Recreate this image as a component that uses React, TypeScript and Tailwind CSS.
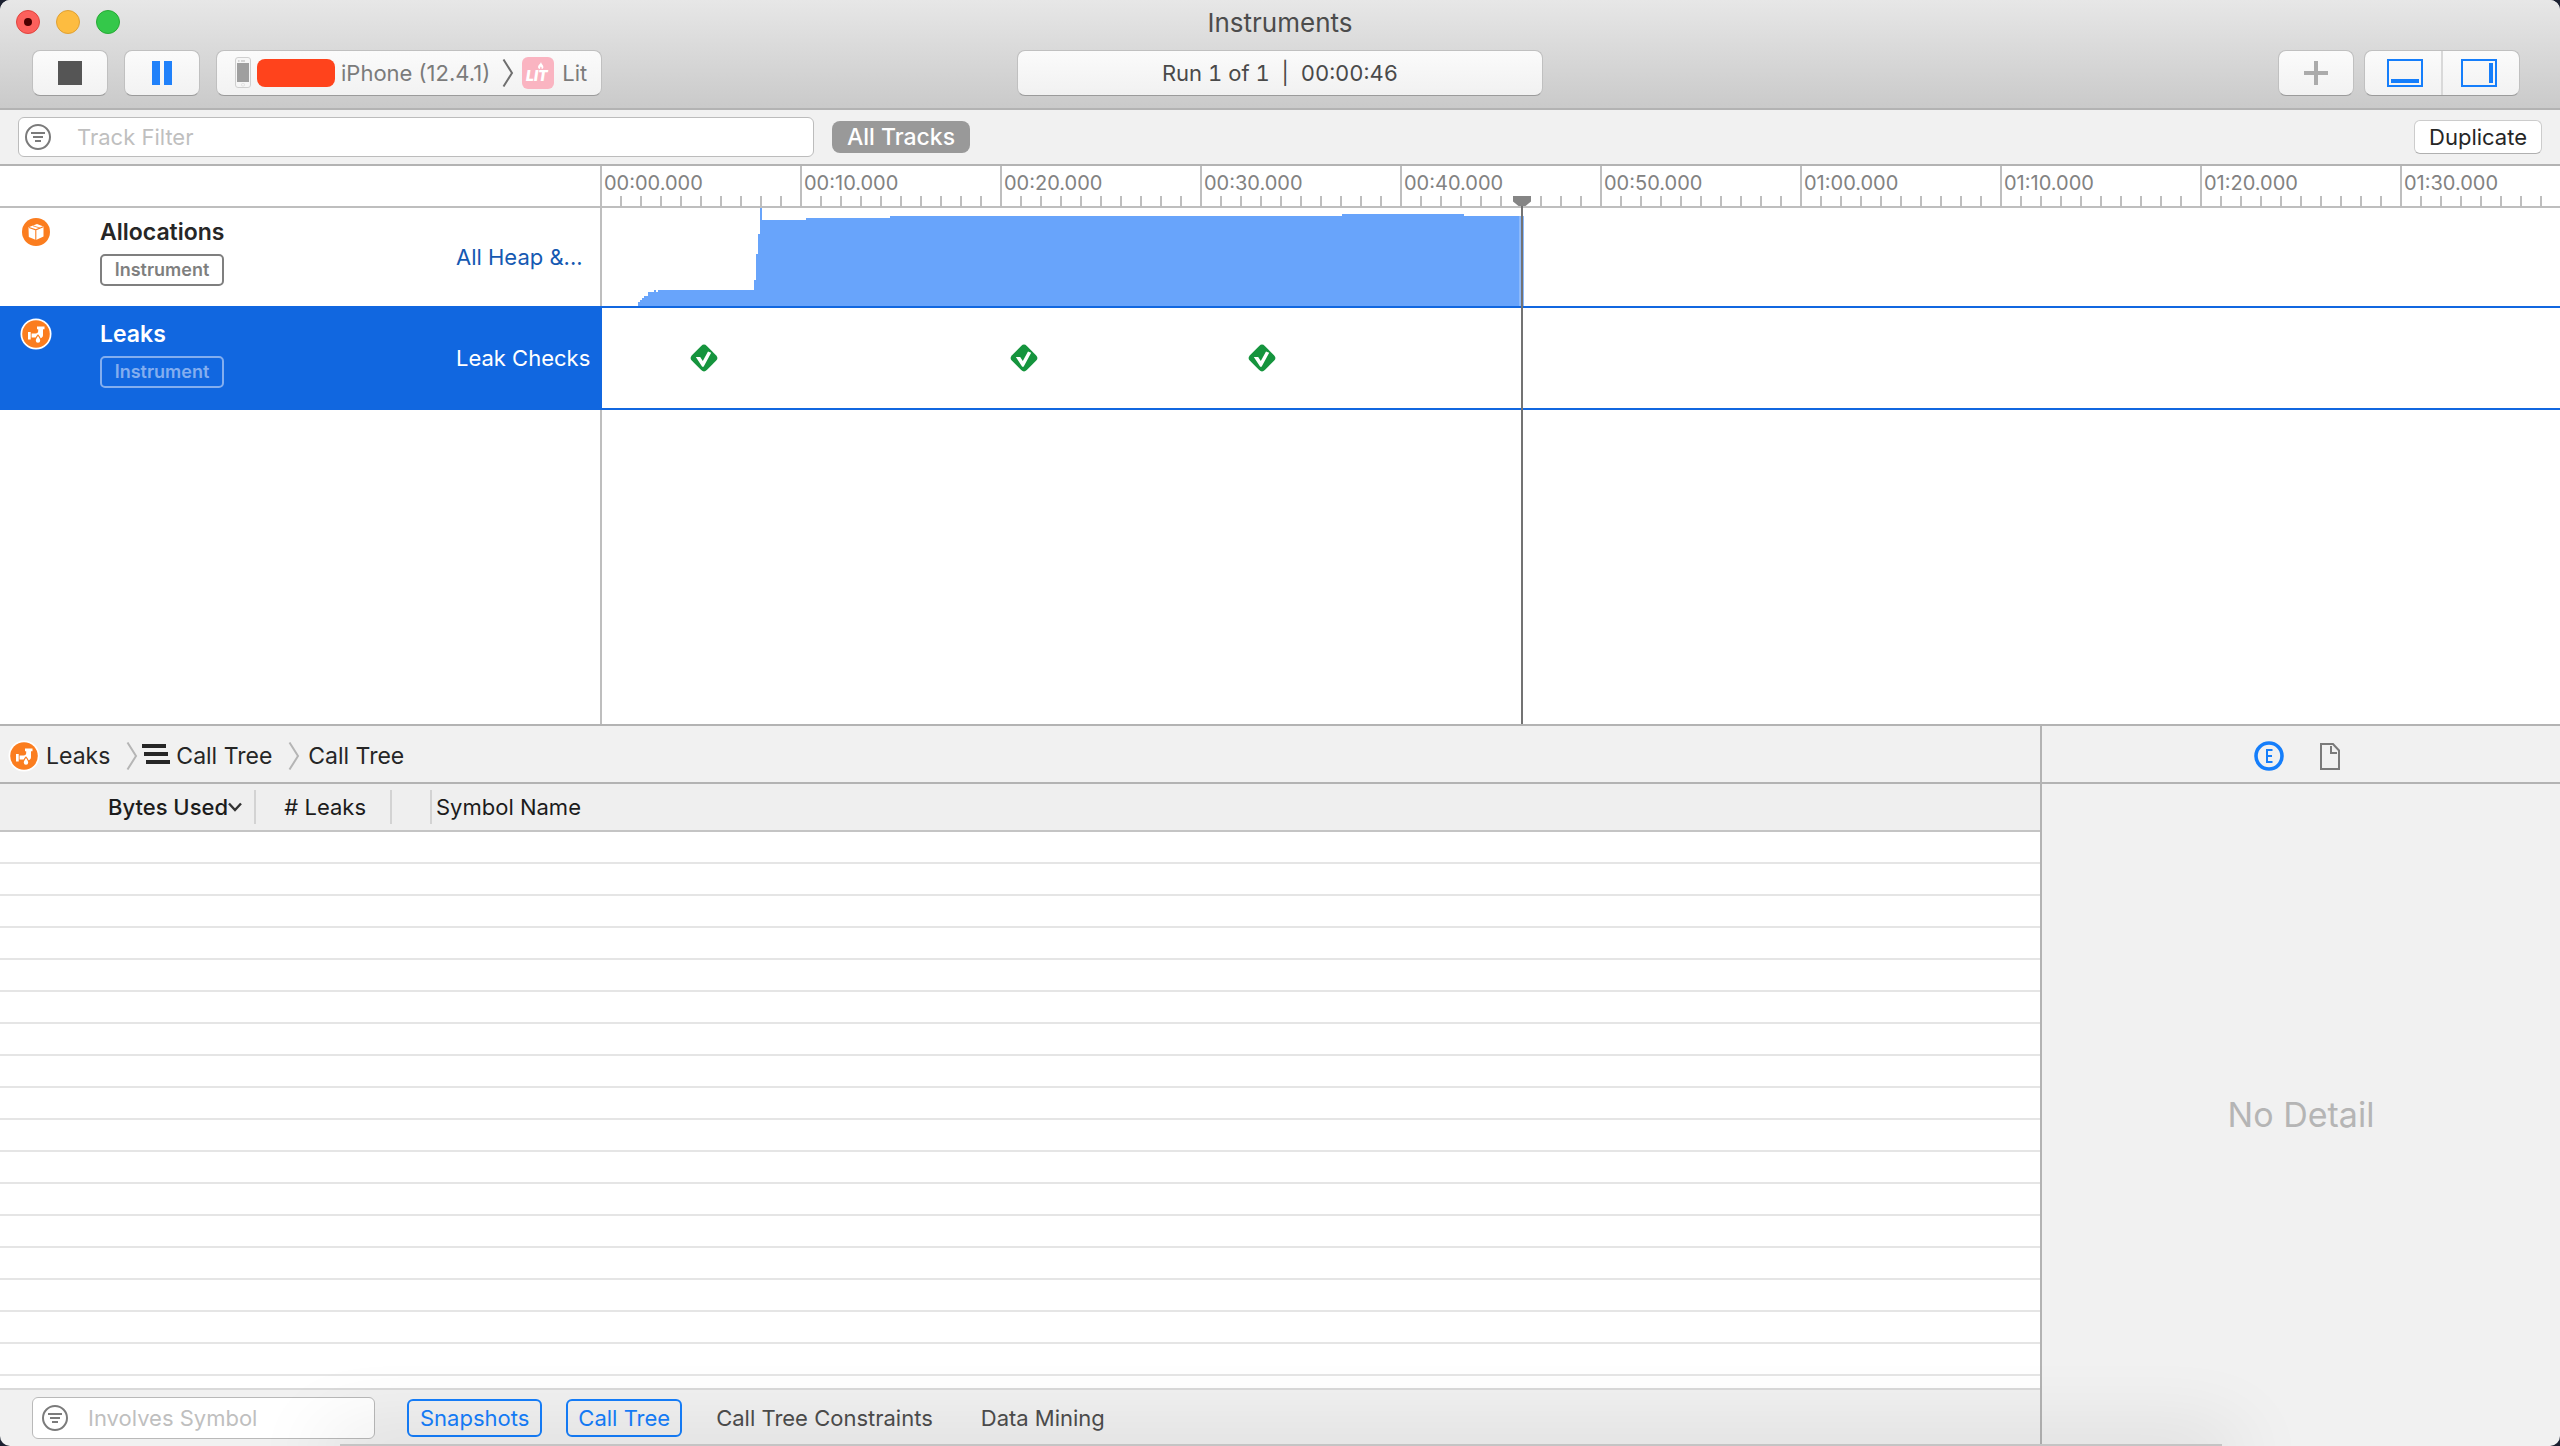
import { useState } from "react";
import type { ReactNode } from "react";

const PX_PER_SECOND = 20;
const PLAYHEAD = 45.95;

const RULER = [
  "00:00.000",
  "00:10.000",
  "00:20.000",
  "00:30.000",
  "00:40.000",
  "00:50.000",
  "01:00.000",
  "01:10.000",
  "01:20.000",
  "01:30.000",
];

const LEAK_CHECKS = [5.1, 21.1, 33];

const EMPTY_ROWS = Array.from({ length: 17 }, (_, i) => i);

export default function App() {
  return (
    <div className="h-screen bg-[#1b2030]">
      <main className="relative flex h-full flex-col overflow-hidden rounded-[10px] bg-[#f1f1f1] font-['Inter','Liberation_Sans',sans-serif] text-[22px] leading-7 text-[#262626]">
        <TitleBar />
        <FilterBar />
        <Tracks />
        <div className="flex min-h-0 flex-[720_1_0px] border-t-2 border-[#b3b3b3]">
          <CallTree />
          <Inspector />
        </div>
        <DockShade />
      </main>
    </div>
  );
}

function TitleBar() {
  return (
    <header className="h-[110px] flex-none border-b-2 border-[#b3b3b3] bg-gradient-to-b from-[#e7e7e7] to-[#cacaca]">
      <div className="grid h-11 grid-cols-[1fr_auto_1fr] items-center px-4">
        <div className="flex gap-4">
          <button
            aria-label="Close"
            className="flex size-6 items-center justify-center rounded-full border border-[#e0443e] bg-[#fc605c]"
          >
            <span className="size-2 rounded-full bg-[#4d0000]" />
          </button>
          <button aria-label="Minimize" className="size-6 rounded-full border border-[#dfa033] bg-[#fdbc40]" />
          <button aria-label="Zoom" className="size-6 rounded-full border border-[#27aa35] bg-[#34c84a]" />
        </div>
        <h1 className="pt-[2px] text-[26px] text-[#4c4c4c]">Instruments</h1>
      </div>

      <div className="mt-[6px] grid grid-cols-[1fr_526px_1fr] px-8">
        <div className="flex gap-4">
          <ToolButton label="Stop">
            <span className="size-6 bg-[#555555]" />
          </ToolButton>
          <ToolButton label="Pause">
            <span className="flex gap-1">
              <span className="h-6 w-2 bg-[#2081fa]" />
              <span className="h-6 w-2 bg-[#2081fa]" />
            </span>
          </ToolButton>
          <button className="flex h-[46px] items-center rounded-lg border border-[#c0c0c0] border-b-[#9b9b9b] bg-gradient-to-b from-[#fbfbfb] to-[#f2f2f2] pr-[14px] pl-[18px] text-[#7b7b7b]">
            <PhoneIcon />
            <span className="ml-[6px] h-7 w-[78px] rounded-lg bg-[#ff431c]" />
            <span className="ml-[6px]">iPhone (12.4.1)</span>
            <Chevron className="mr-2 ml-3 text-[#6f6f6f]" />
            <LitIcon />
            <span className="ml-2">Lit</span>
          </button>
        </div>

        <div className="flex h-[46px] items-center justify-center rounded-lg border border-[#c0c0c0] border-b-[#9b9b9b] bg-gradient-to-b from-[#fbfbfb] to-[#f1f1f1] whitespace-pre text-[#4a4a4a] tabular-nums">
          {"Run 1 of 1  |  00:00:46"}
        </div>

        <div className="flex justify-end gap-[10px] pr-2">
          <ToolButton label="Add instrument">
            <svg width="24" height="24" viewBox="0 0 24 24" fill="#ababab">
              <path d="M10 0h4v10h10v4H14v10h-4V14H0v-4h10z" />
            </svg>
          </ToolButton>
          <div className="flex h-[46px] w-[156px] divide-x-2 divide-[#d9d9d9] overflow-hidden rounded-lg border border-[#c0c0c0] border-b-[#9b9b9b] bg-gradient-to-b from-[#fbfbfb] to-[#f2f2f2]">
            <button aria-label="Toggle detail area" className="flex flex-1 basis-0 items-center justify-center pl-1">
              <svg className="flex-none" width="36" height="28" viewBox="0 0 36 28">
                <rect x="1" y="1" width="34" height="26" fill="none" stroke="#157efb" strokeWidth="2" />
                <rect x="4" y="20" width="28" height="4" fill="#157efb" />
              </svg>
            </button>
            <button aria-label="Toggle inspector" className="flex flex-1 basis-0 items-center justify-center pr-1">
              <svg className="flex-none" width="36" height="28" viewBox="0 0 36 28">
                <rect x="1" y="1" width="34" height="26" fill="none" stroke="#157efb" strokeWidth="2" />
                <rect x="28" y="4" width="4" height="20" fill="#157efb" />
              </svg>
            </button>
          </div>
        </div>
      </div>
    </header>
  );
}

function ToolButton({ label, children }: { label: string; children: ReactNode }) {
  return (
    <button
      aria-label={label}
      className="flex h-[46px] w-[76px] items-center justify-center rounded-lg border border-[#c0c0c0] border-b-[#9b9b9b] bg-gradient-to-b from-[#fbfbfb] to-[#f2f2f2]"
    >
      {children}
    </button>
  );
}

function FilterBar() {
  const [filter, setFilter] = useState("");
  return (
    <div className="flex h-14 flex-none items-center border-b-2 border-[#b3b3b3] bg-[#f1f1f1] px-[18px]">
      <label
        htmlFor="track-filter"
        className="flex h-10 w-[796px] items-center rounded-md border border-[#bcbcbc] bg-white pl-[6px]"
      >
        <FilterIcon />
        <input
          id="track-filter"
          aria-label="Track Filter"
          placeholder="Track Filter"
          value={filter}
          onChange={(e) => setFilter(e.target.value)}
          className="ml-[26px] min-w-0 flex-1 bg-transparent outline-none placeholder:text-[#bfbfbf]"
        />
      </label>
      <button className="ml-[18px] h-8 rounded-lg bg-[#999999] px-[15px] text-[23px] font-medium text-white">
        All Tracks
      </button>
      <button className="ml-auto h-[34px] rounded-md border border-[#cccccc] border-b-[#b0b0b0] bg-white px-[14px]">
        Duplicate
      </button>
    </div>
  );
}

function Tracks() {
  return (
    <section className="flex min-h-0 flex-[558_1_0px] bg-white">
      <div className="w-[602px] flex-none border-r-2 border-[#bebebe]">
        <div className="h-[42px] border-b-2 border-[#bebebe]" />
        <div className="flex h-[98px] pl-[22px]">
          <div className="pt-[10px]">
            <AllocationsIcon />
          </div>
          <div className="ml-[50px] pt-[10px]">
            <p className="text-[23px] font-semibold">Allocations</p>
            <span className="mt-2 flex h-8 w-[124px] items-center justify-center rounded-[5px] border-2 border-[#7f7f7f] text-lg font-semibold text-[#7f7f7f]">
              Instrument
            </span>
          </div>
          <p className="ml-auto w-36 self-center text-[#1559b2]">All Heap &amp;...</p>
        </div>
        <div className="-mr-[2px] flex h-[104px] bg-[#1167e0] pr-[2px] pl-5 text-white">
          <div className="pt-3">
            <LeaksIcon size={32} />
          </div>
          <div className="ml-12 pt-[14px]">
            <p className="text-[23px] font-semibold">Leaks</p>
            <span className="mt-2 flex h-8 w-[124px] items-center justify-center rounded-[5px] border-2 border-[#83aeef] text-lg font-semibold text-[#83aeef]">
              Instrument
            </span>
          </div>
          <p className="ml-auto w-36 self-center">Leak Checks</p>
        </div>
      </div>

      <div className="relative min-w-0 flex-1 overflow-hidden">
        <Ruler />
        <div className="h-[98px]">
          <AllocationsChart />
        </div>
        <div className="relative h-[104px] border-y-2 border-[#1167e0]">
          {LEAK_CHECKS.map((t) => (
            <span
              key={t}
              className="absolute top-1/2 -translate-x-1/2 -translate-y-1/2"
              style={{ left: t * PX_PER_SECOND }}
            >
              <CheckDiamond />
            </span>
          ))}
        </div>
        <Playhead />
      </div>
    </section>
  );
}

function Ruler() {
  return (
    <div className="flex h-[42px] overflow-hidden border-b-2 border-[#bebebe]">
      {RULER.map((label) => (
        <div key={label} className="w-[200px] flex-none border-r-2 border-[#bebebe]">
          <div className="h-[30px] pl-[2px] text-xl leading-[34px] text-[#828282]">{label}</div>
          <div className="flex">
            {[1, 2, 3, 4, 5, 6, 7, 8, 9].map((n) => (
              <span key={n} className="h-[10px] w-5 border-r-2 border-[#bebebe]" />
            ))}
          </div>
        </div>
      ))}
    </div>
  );
}

function AllocationsChart() {
  return (
    <svg className="block" width="922" height="98" viewBox="0 0 922 98" shapeRendering="crispEdges">
      <path
        fill="#68a4fb"
        d="M36 98V94h2V92h2V90h2V88h4V84h6V82h2V84h2V82h96V72h2V46h2V26h2V0h2V12h44V10h84V8h452V6h122V8h60V98z"
      />
      <rect x="917" y="8" width="5" height="90" fill="#8bb9fc" />
    </svg>
  );
}

function Playhead() {
  return (
    <div
      className="absolute top-[30px] bottom-0 w-[2px] bg-[#737373]"
      style={{ left: PLAYHEAD * PX_PER_SECOND }}
    >
      <svg className="absolute top-0 -left-2" width="18" height="10" viewBox="0 0 18 10">
        <path d="M0 0h18v5.500L12.500 10h-7L0 5.500z" fill="#858585" />
      </svg>
    </div>
  );
}

function CallTree() {
  const [symbol, setSymbol] = useState("");
  return (
    <section className="flex min-w-0 flex-1 flex-col">
      <nav className="flex h-[58px] flex-none items-center border-b-2 border-[#b3b3b3] pt-1 pl-2 text-[23px]">
        <LeaksIcon size={32} />
        <a href="#leaks" className="ml-[6px]">
          Leaks
        </a>
        <Chevron className="ml-4 text-[#b5b5b5]" />
        <TreeIcon />
        <a href="#call-tree" className="ml-[6px]">
          Call Tree
        </a>
        <Chevron className="ml-4 text-[#b5b5b5]" />
        <a href="#call-tree-root" className="ml-2">
          Call Tree
        </a>
      </nav>

      <div className="min-h-0 flex-1 overflow-hidden bg-white">
        <table className="w-full table-fixed border-separate border-spacing-0">
          <thead>
            <tr className="h-12 bg-[#efefef] text-left text-[#1c1c1c]">
              <th scope="col" className="w-64 border-b-2 border-[#c4c4c4] p-0 font-medium">
                <span className="flex h-[34px] items-center justify-end border-r-2 border-[#d3d3d3] pr-3">
                  Bytes Used
                  <svg width="14" height="10" viewBox="0 0 14 10" fill="none" stroke="#333" strokeWidth="2.400">
                    <path d="M1 1.500l6 6.500 6-6.500" />
                  </svg>
                </span>
              </th>
              <th scope="col" className="w-[136px] border-b-2 border-[#c4c4c4] p-0 font-normal">
                <span className="flex h-[34px] items-center justify-end border-r-2 border-[#d3d3d3] pr-6">
                  # Leaks
                </span>
              </th>
              <th scope="col" className="w-10 border-b-2 border-[#c4c4c4] p-0">
                <span className="block h-[34px] border-r-2 border-[#d3d3d3]" />
              </th>
              <th scope="col" className="border-b-2 border-[#c4c4c4] p-0 pl-1 font-normal">
                Symbol Name
              </th>
            </tr>
          </thead>
          <tbody>
            {EMPTY_ROWS.map((i) => (
              <tr key={i} className="h-8">
                <td colSpan={4} className="border-b-2 border-[#e5e5e5] p-0" />
              </tr>
            ))}
          </tbody>
        </table>
      </div>

      <footer className="flex h-[58px] flex-none items-center border-t-2 border-[#d9d9d9] pl-8 text-[#4d4d4d]">
        <label
          htmlFor="symbol-filter"
          className="flex h-[42px] w-[343px] items-center rounded-md border border-[#b9b9b9] bg-white pl-[9px]"
        >
          <FilterIcon />
          <input
            id="symbol-filter"
            aria-label="Involves Symbol"
            placeholder="Involves Symbol"
            value={symbol}
            onChange={(e) => setSymbol(e.target.value)}
            className="ml-5 min-w-0 flex-1 bg-transparent outline-none placeholder:text-[#bfbfbf]"
          />
        </label>
        <button className="ml-8 h-[38px] rounded-md border-2 border-[#157efb] px-[11px] text-[#157efb]">
          Snapshots
        </button>
        <button className="ml-6 h-[38px] rounded-md border-2 border-[#157efb] px-[10px] text-[#157efb]">
          Call Tree
        </button>
        <button className="ml-[34px]">Call Tree Constraints</button>
        <button className="ml-12">Data Mining</button>
      </footer>
    </section>
  );
}

function Inspector() {
  return (
    <aside className="flex w-[520px] flex-none flex-col border-l-2 border-[#b3b3b3]">
      <div className="flex h-[58px] flex-none items-center justify-center gap-9 border-b-2 border-[#b3b3b3] pt-1 pr-2">
        <button aria-label="Extended detail">
          <svg width="30" height="30" viewBox="0 0 30 30" fill="none" stroke="#157efb">
            <circle cx="15" cy="15" r="13" strokeWidth="3.600" />
            <path d="M18.500 9h-5.500v12h5.500M13 15h5" strokeWidth="2" />
          </svg>
        </button>
        <button aria-label="Run info">
          <svg width="20" height="28" viewBox="0 0 20 28" fill="none" stroke="#7a7a7a" strokeWidth="2">
            <path d="M1 2h12l6 6.500V27H1zM11 4v7h6" />
          </svg>
        </button>
      </div>
      <p className="flex flex-1 items-center justify-center text-[34px] text-[#b5b5b5]">No Detail</p>
    </aside>
  );
}

/* soft shadow the dock throws up over the bottom edge of the window */
function DockShade() {
  return (
    <div className="pointer-events-none absolute right-[338px] bottom-0 left-[340px] h-[2px] bg-[#c4c4c4] shadow-[0_10px_80px_14px_rgba(0,0,0,0.16)]" />
  );
}

function Chevron({ className }: { className?: string }) {
  return (
    <svg
      className={className}
      width="12"
      height="28"
      viewBox="0 0 12 28"
      fill="none"
      stroke="currentColor"
      strokeWidth="2"
    >
      <path d="M1.500 0.500l8.500 13.500-8.500 13.500" />
    </svg>
  );
}

function FilterIcon() {
  return (
    <svg className="flex-none" width="26" height="26" viewBox="0 0 26 26" fill="none" stroke="#7b7b7b" strokeWidth="2">
      <circle cx="13" cy="13" r="12" />
      <path d="M6 9h14M8 13h10M10 17h6" />
    </svg>
  );
}

function PhoneIcon() {
  return (
    <svg width="16" height="32" viewBox="0 0 16 32">
      <rect x="0.500" y="0.500" width="15" height="30" rx="2.500" fill="#f6f6f6" stroke="#cfcfcf" />
      <path d="M3 4h1.500M6 4h4" stroke="#b5b5b5" />
      <rect x="2" y="6" width="12" height="19" fill="#9f9f9f" />
      <rect x="6.500" y="26.500" width="3" height="2.500" rx="1" fill="none" stroke="#dadada" strokeWidth="0.800" />
    </svg>
  );
}

function LitIcon() {
  return (
    <svg width="32" height="32" viewBox="0 0 32 32">
      <rect width="32" height="32" rx="6" fill="#fab4c1" />
      <path d="M19 5c0 2 2.600 3 2.400 5.200C21.300 11.300 20.400 12 19.600 12c.3-1-.1-1.800-.8-2.400-.5.800-.9 1.400-.7 2.400-1.400-.2-2.300-1.100-2-2.600C16.400 7.600 18.700 7 19 5z" fill="#fff" />
      <text
        x="4"
        y="24"
        fontSize="14"
        fill="#fff"
        className="font-['Inter','Liberation_Sans',sans-serif] font-black italic"
      >
        LIT
      </text>
    </svg>
  );
}

function AllocationsIcon() {
  return (
    <svg width="28" height="28" viewBox="0 0 28 28">
      <circle cx="14" cy="14" r="14" fill="#fb7d1f" />
      <path d="M6.500 9.200L15 6l6.500 2.400v10.200L14 22l-7.200-3z" fill="#fff" />
      <path d="M7 9.500l6.800 2.300L21.300 8.700M13.800 11.800V22" fill="none" stroke="#fb7d1f" strokeWidth="1.100" />
      <path d="M11 7.800l7 2.300" fill="none" stroke="#fb7d1f" strokeWidth="0.800" />
    </svg>
  );
}

/* a tap with a drop under its spout */
function LeaksIcon({ size }: { size: number }) {
  return (
    <svg width={size} height={size} viewBox="0 0 32 32">
      <circle cx="16" cy="16" r="15.500" fill="#fff" />
      <circle cx="16" cy="16" r="13.800" fill="#fb7d1f" />
      <g fill="#fff">
        <path d="M17 8.500h7.500v2.700H23V17c0 1.700-.8 2.800-2.400 3.200-.4-1.200-1.400-2.600-2.600-4-1 1-1.800 2.200-2.400 3.400h-4v-4.200h4c1.700 0 2.600-.8 2.600-2.400v-1.800H17z" />
        <path d="M8 14h2.700v7.500H8z" />
        <path d="M18 18c1.200 1.900 2.200 3.200 2.200 4.600a2.200 2.200 0 0 1-4.400 0c0-1.400 1-2.700 2.200-4.600z" />
      </g>
    </svg>
  );
}

function TreeIcon() {
  return (
    <svg className="ml-1" width="28" height="28" viewBox="0 0 28 28" fill="#262626">
      <path d="M0 2h24v4H0zM2 10h24v4H2zM4 18h24v4H4z" />
    </svg>
  );
}

function CheckDiamond() {
  return (
    <svg width="30" height="30" viewBox="0 0 30 30">
      <rect x="4.500" y="4.500" width="21" height="21" rx="4" fill="#15943d" transform="rotate(45 15 15)" />
      <path d="M6.800 14h4.400l2.600 4 5.200-9.500 3.200 1.300-7.600 14h-1.400z" fill="#fff" />
    </svg>
  );
}
